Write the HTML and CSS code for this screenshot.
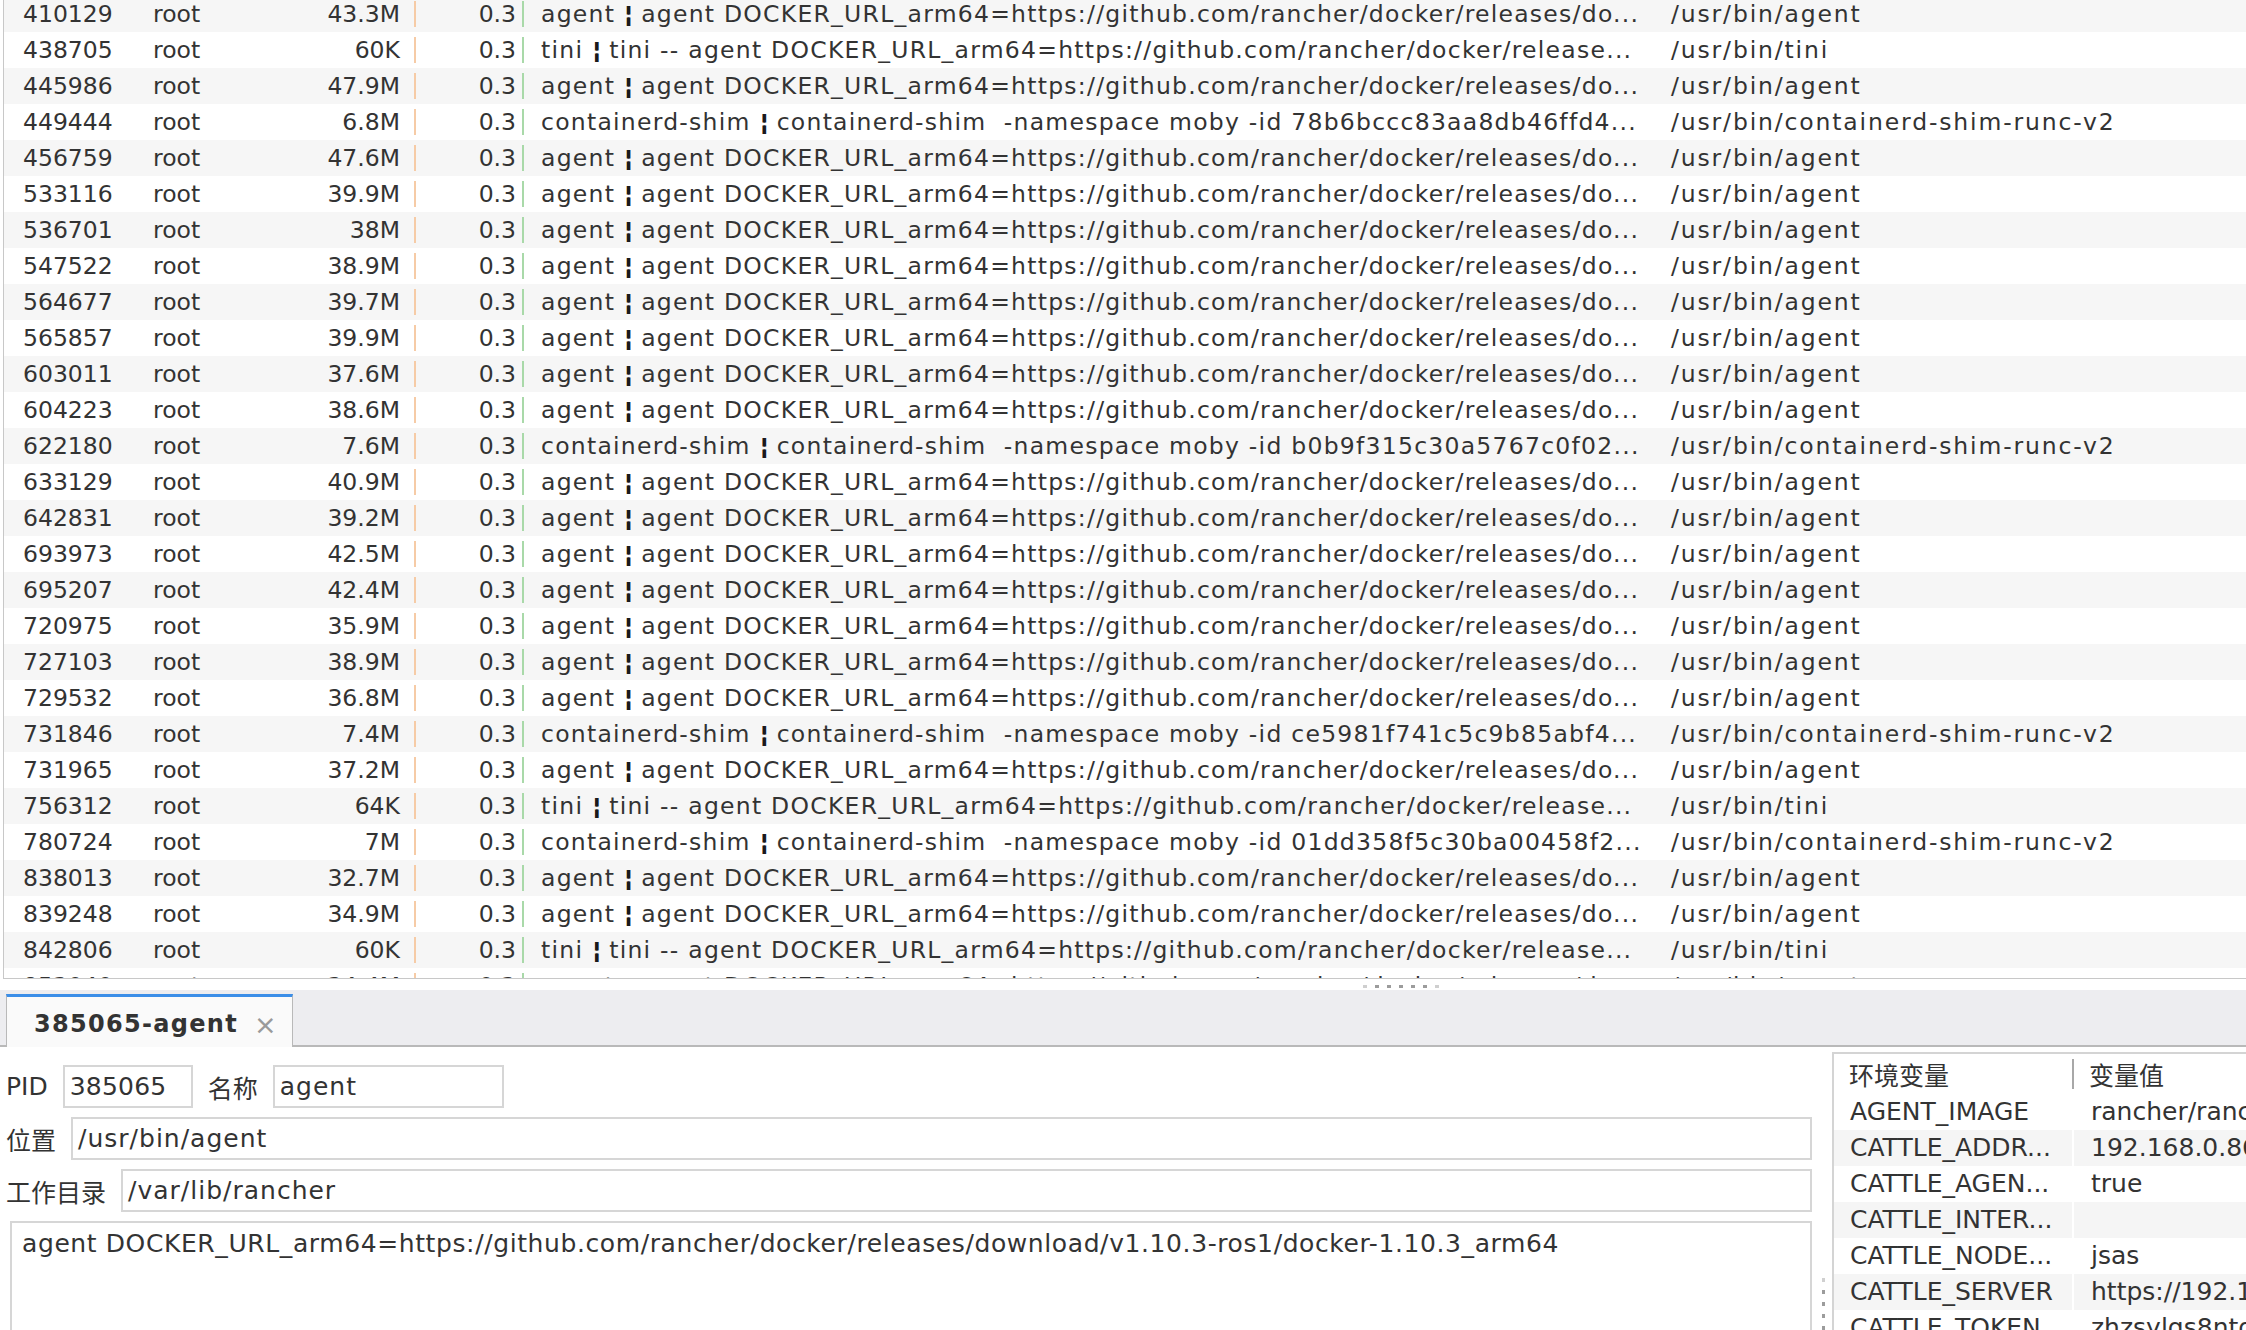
FILE: index.html
```html
<!DOCTYPE html>
<html lang="zh">
<head>
<meta charset="utf-8">
<title>进程</title>
<link rel="stylesheet" href="styles.css">
</head>
<body>
<div class="app">
  <div class="proc-table">
    <div class="rows">
      <div class="row"><span class="c-pid">410129</span><span class="c-user">root</span><span class="c-mem">43.3M</span><span class="sep sep-mem"></span><span class="c-cpu">0.3</span><span class="sep sep-cpu"></span><span class="c-cmd">agent <b class="bar">¦</b> agent DOCKER_URL_arm64=https://github.com/rancher/docker/releases/do...</span><span class="c-path">/usr/bin/agent</span></div>
      <div class="row"><span class="c-pid">438705</span><span class="c-user">root</span><span class="c-mem">60K</span><span class="sep sep-mem"></span><span class="c-cpu">0.3</span><span class="sep sep-cpu"></span><span class="c-cmd">tini <b class="bar">¦</b> tini -- agent DOCKER_URL_arm64=https://github.com/rancher/docker/release...</span><span class="c-path">/usr/bin/tini</span></div>
      <div class="row"><span class="c-pid">445986</span><span class="c-user">root</span><span class="c-mem">47.9M</span><span class="sep sep-mem"></span><span class="c-cpu">0.3</span><span class="sep sep-cpu"></span><span class="c-cmd">agent <b class="bar">¦</b> agent DOCKER_URL_arm64=https://github.com/rancher/docker/releases/do...</span><span class="c-path">/usr/bin/agent</span></div>
      <div class="row"><span class="c-pid">449444</span><span class="c-user">root</span><span class="c-mem">6.8M</span><span class="sep sep-mem"></span><span class="c-cpu">0.3</span><span class="sep sep-cpu"></span><span class="c-cmd">containerd-shim <b class="bar">¦</b> containerd-shim  -namespace moby -id 78b6bccc83aa8db46ffd4...</span><span class="c-path">/usr/bin/containerd-shim-runc-v2</span></div>
      <div class="row"><span class="c-pid">456759</span><span class="c-user">root</span><span class="c-mem">47.6M</span><span class="sep sep-mem"></span><span class="c-cpu">0.3</span><span class="sep sep-cpu"></span><span class="c-cmd">agent <b class="bar">¦</b> agent DOCKER_URL_arm64=https://github.com/rancher/docker/releases/do...</span><span class="c-path">/usr/bin/agent</span></div>
      <div class="row"><span class="c-pid">533116</span><span class="c-user">root</span><span class="c-mem">39.9M</span><span class="sep sep-mem"></span><span class="c-cpu">0.3</span><span class="sep sep-cpu"></span><span class="c-cmd">agent <b class="bar">¦</b> agent DOCKER_URL_arm64=https://github.com/rancher/docker/releases/do...</span><span class="c-path">/usr/bin/agent</span></div>
      <div class="row"><span class="c-pid">536701</span><span class="c-user">root</span><span class="c-mem">38M</span><span class="sep sep-mem"></span><span class="c-cpu">0.3</span><span class="sep sep-cpu"></span><span class="c-cmd">agent <b class="bar">¦</b> agent DOCKER_URL_arm64=https://github.com/rancher/docker/releases/do...</span><span class="c-path">/usr/bin/agent</span></div>
      <div class="row"><span class="c-pid">547522</span><span class="c-user">root</span><span class="c-mem">38.9M</span><span class="sep sep-mem"></span><span class="c-cpu">0.3</span><span class="sep sep-cpu"></span><span class="c-cmd">agent <b class="bar">¦</b> agent DOCKER_URL_arm64=https://github.com/rancher/docker/releases/do...</span><span class="c-path">/usr/bin/agent</span></div>
      <div class="row"><span class="c-pid">564677</span><span class="c-user">root</span><span class="c-mem">39.7M</span><span class="sep sep-mem"></span><span class="c-cpu">0.3</span><span class="sep sep-cpu"></span><span class="c-cmd">agent <b class="bar">¦</b> agent DOCKER_URL_arm64=https://github.com/rancher/docker/releases/do...</span><span class="c-path">/usr/bin/agent</span></div>
      <div class="row"><span class="c-pid">565857</span><span class="c-user">root</span><span class="c-mem">39.9M</span><span class="sep sep-mem"></span><span class="c-cpu">0.3</span><span class="sep sep-cpu"></span><span class="c-cmd">agent <b class="bar">¦</b> agent DOCKER_URL_arm64=https://github.com/rancher/docker/releases/do...</span><span class="c-path">/usr/bin/agent</span></div>
      <div class="row"><span class="c-pid">603011</span><span class="c-user">root</span><span class="c-mem">37.6M</span><span class="sep sep-mem"></span><span class="c-cpu">0.3</span><span class="sep sep-cpu"></span><span class="c-cmd">agent <b class="bar">¦</b> agent DOCKER_URL_arm64=https://github.com/rancher/docker/releases/do...</span><span class="c-path">/usr/bin/agent</span></div>
      <div class="row"><span class="c-pid">604223</span><span class="c-user">root</span><span class="c-mem">38.6M</span><span class="sep sep-mem"></span><span class="c-cpu">0.3</span><span class="sep sep-cpu"></span><span class="c-cmd">agent <b class="bar">¦</b> agent DOCKER_URL_arm64=https://github.com/rancher/docker/releases/do...</span><span class="c-path">/usr/bin/agent</span></div>
      <div class="row"><span class="c-pid">622180</span><span class="c-user">root</span><span class="c-mem">7.6M</span><span class="sep sep-mem"></span><span class="c-cpu">0.3</span><span class="sep sep-cpu"></span><span class="c-cmd">containerd-shim <b class="bar">¦</b> containerd-shim  -namespace moby -id b0b9f315c30a5767c0f02...</span><span class="c-path">/usr/bin/containerd-shim-runc-v2</span></div>
      <div class="row"><span class="c-pid">633129</span><span class="c-user">root</span><span class="c-mem">40.9M</span><span class="sep sep-mem"></span><span class="c-cpu">0.3</span><span class="sep sep-cpu"></span><span class="c-cmd">agent <b class="bar">¦</b> agent DOCKER_URL_arm64=https://github.com/rancher/docker/releases/do...</span><span class="c-path">/usr/bin/agent</span></div>
      <div class="row"><span class="c-pid">642831</span><span class="c-user">root</span><span class="c-mem">39.2M</span><span class="sep sep-mem"></span><span class="c-cpu">0.3</span><span class="sep sep-cpu"></span><span class="c-cmd">agent <b class="bar">¦</b> agent DOCKER_URL_arm64=https://github.com/rancher/docker/releases/do...</span><span class="c-path">/usr/bin/agent</span></div>
      <div class="row"><span class="c-pid">693973</span><span class="c-user">root</span><span class="c-mem">42.5M</span><span class="sep sep-mem"></span><span class="c-cpu">0.3</span><span class="sep sep-cpu"></span><span class="c-cmd">agent <b class="bar">¦</b> agent DOCKER_URL_arm64=https://github.com/rancher/docker/releases/do...</span><span class="c-path">/usr/bin/agent</span></div>
      <div class="row"><span class="c-pid">695207</span><span class="c-user">root</span><span class="c-mem">42.4M</span><span class="sep sep-mem"></span><span class="c-cpu">0.3</span><span class="sep sep-cpu"></span><span class="c-cmd">agent <b class="bar">¦</b> agent DOCKER_URL_arm64=https://github.com/rancher/docker/releases/do...</span><span class="c-path">/usr/bin/agent</span></div>
      <div class="row"><span class="c-pid">720975</span><span class="c-user">root</span><span class="c-mem">35.9M</span><span class="sep sep-mem"></span><span class="c-cpu">0.3</span><span class="sep sep-cpu"></span><span class="c-cmd">agent <b class="bar">¦</b> agent DOCKER_URL_arm64=https://github.com/rancher/docker/releases/do...</span><span class="c-path">/usr/bin/agent</span></div>
      <div class="row"><span class="c-pid">727103</span><span class="c-user">root</span><span class="c-mem">38.9M</span><span class="sep sep-mem"></span><span class="c-cpu">0.3</span><span class="sep sep-cpu"></span><span class="c-cmd">agent <b class="bar">¦</b> agent DOCKER_URL_arm64=https://github.com/rancher/docker/releases/do...</span><span class="c-path">/usr/bin/agent</span></div>
      <div class="row"><span class="c-pid">729532</span><span class="c-user">root</span><span class="c-mem">36.8M</span><span class="sep sep-mem"></span><span class="c-cpu">0.3</span><span class="sep sep-cpu"></span><span class="c-cmd">agent <b class="bar">¦</b> agent DOCKER_URL_arm64=https://github.com/rancher/docker/releases/do...</span><span class="c-path">/usr/bin/agent</span></div>
      <div class="row"><span class="c-pid">731846</span><span class="c-user">root</span><span class="c-mem">7.4M</span><span class="sep sep-mem"></span><span class="c-cpu">0.3</span><span class="sep sep-cpu"></span><span class="c-cmd">containerd-shim <b class="bar">¦</b> containerd-shim  -namespace moby -id ce5981f741c5c9b85abf4...</span><span class="c-path">/usr/bin/containerd-shim-runc-v2</span></div>
      <div class="row"><span class="c-pid">731965</span><span class="c-user">root</span><span class="c-mem">37.2M</span><span class="sep sep-mem"></span><span class="c-cpu">0.3</span><span class="sep sep-cpu"></span><span class="c-cmd">agent <b class="bar">¦</b> agent DOCKER_URL_arm64=https://github.com/rancher/docker/releases/do...</span><span class="c-path">/usr/bin/agent</span></div>
      <div class="row"><span class="c-pid">756312</span><span class="c-user">root</span><span class="c-mem">64K</span><span class="sep sep-mem"></span><span class="c-cpu">0.3</span><span class="sep sep-cpu"></span><span class="c-cmd">tini <b class="bar">¦</b> tini -- agent DOCKER_URL_arm64=https://github.com/rancher/docker/release...</span><span class="c-path">/usr/bin/tini</span></div>
      <div class="row"><span class="c-pid">780724</span><span class="c-user">root</span><span class="c-mem">7M</span><span class="sep sep-mem"></span><span class="c-cpu">0.3</span><span class="sep sep-cpu"></span><span class="c-cmd">containerd-shim <b class="bar">¦</b> containerd-shim  -namespace moby -id 01dd358f5c30ba00458f2...</span><span class="c-path">/usr/bin/containerd-shim-runc-v2</span></div>
      <div class="row"><span class="c-pid">838013</span><span class="c-user">root</span><span class="c-mem">32.7M</span><span class="sep sep-mem"></span><span class="c-cpu">0.3</span><span class="sep sep-cpu"></span><span class="c-cmd">agent <b class="bar">¦</b> agent DOCKER_URL_arm64=https://github.com/rancher/docker/releases/do...</span><span class="c-path">/usr/bin/agent</span></div>
      <div class="row"><span class="c-pid">839248</span><span class="c-user">root</span><span class="c-mem">34.9M</span><span class="sep sep-mem"></span><span class="c-cpu">0.3</span><span class="sep sep-cpu"></span><span class="c-cmd">agent <b class="bar">¦</b> agent DOCKER_URL_arm64=https://github.com/rancher/docker/releases/do...</span><span class="c-path">/usr/bin/agent</span></div>
      <div class="row"><span class="c-pid">842806</span><span class="c-user">root</span><span class="c-mem">60K</span><span class="sep sep-mem"></span><span class="c-cpu">0.3</span><span class="sep sep-cpu"></span><span class="c-cmd">tini <b class="bar">¦</b> tini -- agent DOCKER_URL_arm64=https://github.com/rancher/docker/release...</span><span class="c-path">/usr/bin/tini</span></div>
      <div class="row"><span class="c-pid">853040</span><span class="c-user">root</span><span class="c-mem">34.4M</span><span class="sep sep-mem"></span><span class="c-cpu">0.3</span><span class="sep sep-cpu"></span><span class="c-cmd">agent <b class="bar">¦</b> agent DOCKER_URL_arm64=https://github.com/rancher/docker/releases/do...</span><span class="c-path">/usr/bin/agent</span></div>
    </div>
  </div>

  <div class="hsplit">
    <span class="grip-h"><i></i><i></i><i></i><i></i><i></i><i></i><i></i></span>
  </div>

  <div class="tabstrip">
    <div class="tab">
      <span class="tab-title">385065-agent</span>
      <span class="tab-close">×</span>
    </div>
  </div>

  <div class="detail">
    <div class="form">
      <div class="frow">
        <label class="flabel">PID</label>
        <div class="field field-pid">385065</div>
        <label class="flabel">名称</label>
        <div class="field field-name">agent</div>
      </div>
      <div class="frow">
        <label class="flabel">位置</label>
        <div class="field field-grow">/usr/bin/agent</div>
      </div>
      <div class="frow">
        <label class="flabel">工作目录</label>
        <div class="field field-grow">/var/lib/rancher</div>
      </div>
      <div class="cmdline">agent DOCKER_URL_arm64=https://github.com/rancher/docker/releases/download/v1.10.3-ros1/docker-1.10.3_arm64</div>
    </div>

    <div class="vsplit">
      <span class="grip-v"><i></i><i></i><i></i><i></i><i></i></span>
    </div>

    <div class="env">
      <div class="env-head">
        <span class="eh-key">环境变量</span>
        <span class="eh-sep"></span>
        <span class="eh-val">变量值</span>
      </div>
      <div class="env-row"><span class="ek">AGENT_IMAGE</span><span class="ev">rancher/rancher-agent:v2.5.8</span></div>
      <div class="env-row"><span class="ek">CATTLE_ADDR...</span><span class="ev">192.168.0.86</span></div>
      <div class="env-row"><span class="ek">CATTLE_AGEN...</span><span class="ev">true</span></div>
      <div class="env-row"><span class="ek">CATTLE_INTER...</span><span class="ev"></span></div>
      <div class="env-row"><span class="ek">CATTLE_NODE...</span><span class="ev">jsas</span></div>
      <div class="env-row"><span class="ek">CATTLE_SERVER</span><span class="ev">https://192.168.0.86</span></div>
      <div class="env-row"><span class="ek">CATTLE_TOKEN</span><span class="ev">zhzsylqs8ntq</span></div>
    </div>
  </div>
</div>
</body>
</html>
```

FILE: styles.css
```css
* { box-sizing: border-box; }

html, body {
  margin: 0;
  padding: 0;
  background: #ffffff;
}

body {
  width: 2246px;
  height: 1330px;
  overflow: hidden;
  font-family: "DejaVu Sans", "Noto Sans CJK SC", sans-serif;
  color: #333333;
}

.app {
  display: flex;
  flex-direction: column;
  height: 1330px;
}

/* ---------- process table ---------- */
.proc-table {
  height: 979px;
  margin-left: 3px;
  border-left: 1px solid #c8c8c8;
  border-bottom: 1px solid #c8c8c8;
  overflow: hidden;
  flex: none;
}

.rows {
  margin-top: -4px;
}

.row {
  display: flex;
  align-items: center;
  height: 36px;
  line-height: 36px;
  font-size: 23.5px;
  white-space: pre;
  background: #ffffff;
}

.row:nth-child(odd) {
  background: #f6f6f6;
}

.c-pid {
  width: 149px;
  padding-left: 19px;
  flex: none;
}

.c-user {
  width: 130px;
  flex: none;
}

.c-mem {
  width: 117px;
  text-align: right;
  flex: none;
}

.sep {
  flex: none;
  width: 2px;
  height: 26px;
}

.sep-mem {
  margin-left: 14px;
  background: #f6cba6;
}

.c-cpu {
  width: 100px;
  text-align: right;
  flex: none;
}

.sep-cpu {
  margin-left: 6px;
  background: #a9d9a9;
}

.c-cmd {
  width: 1147px;
  padding-left: 17px;
  overflow: hidden;
  flex: none;
  letter-spacing: 1.25px;
}

.bar {
  font-weight: bold;
  color: #1a1a1a;
  letter-spacing: 0;
  text-shadow: 1px 0 0 #1a1a1a;
}

.c-path {
  flex: none;
  letter-spacing: 1.85px;
}

/* ---------- horizontal splitter ---------- */
.hsplit {
  height: 11px;
  flex: none;
  display: flex;
  align-items: flex-start;
  padding-left: 1363px;
  padding-top: 6px;
}

.grip-h {
  display: flex;
  gap: 8px;
}

.grip-h i {
  display: block;
  width: 4px;
  height: 3px;
  background: #9c9c9c;
}

.grip-h i:first-child,
.grip-h i:last-child {
  background: #cfcfcf;
}

/* ---------- tab strip ---------- */
.tabstrip {
  flex: none;
  height: 57px;
  background: #ededf0;
  border-bottom: 2px solid #b9b9b9;
  display: flex;
  align-items: flex-end;
  padding-left: 6px;
}

.tab {
  width: 287px;
  height: 53px;
  margin-bottom: -2px;
  background: #fafafa;
  border-top: 3px solid #3b8ee8;
  border-left: 1px solid #b9b9b9;
  border-right: 1px solid #b9b9b9;
  display: flex;
  align-items: center;
  padding-left: 27px;
  padding-top: 4px;
  position: relative;
}

.tab-title {
  font-weight: bold;
  font-size: 24px;
  letter-spacing: 1.3px;
  color: #333333;
}

.tab-close {
  margin-left: 16px;
  font-size: 27px;
  color: #9a9a9a;
  line-height: 1;
}

/* ---------- detail ---------- */
.detail {
  flex: 1;
  display: flex;
  min-height: 0;
}

.form {
  width: 1812px;
  flex: none;
  padding-top: 18px;
  padding-left: 6px;
  display: flex;
  flex-direction: column;
  gap: 9px;
}

.frow {
  display: flex;
  align-items: center;
  height: 43px;
}

.flabel {
  font-size: 25px;
  margin-right: 15px;
  white-space: nowrap;
}

.field {
  height: 43px;
  border: 2px solid #d6d6d6;
  background: #ffffff;
  font-size: 25px;
  line-height: 39px;
  padding-left: 5px;
  white-space: nowrap;
  overflow: hidden;
  letter-spacing: 1px;
}

.field-pid {
  width: 130px;
  margin-right: 15px;
  letter-spacing: 0.2px;
}

.field-name {
  width: 231px;
}

.field-grow {
  flex: 1;
}

.cmdline {
  flex: 1;
  margin-left: 4px;
  border: 2px solid #d6d6d6;
  border-bottom: none;
  font-size: 25px;
  padding: 6px 10px;
  white-space: nowrap;
  overflow: hidden;
  letter-spacing: 0.6px;
}

/* ---------- vertical splitter ---------- */
.vsplit {
  width: 20px;
  flex: none;
  padding-top: 231px;
  padding-left: 10px;
}

.grip-v {
  display: flex;
  flex-direction: column;
  gap: 8px;
}

.grip-v i {
  display: block;
  width: 3px;
  height: 4px;
  background: #9c9c9c;
}

.grip-v i:first-child {
  background: #d0d0d0;
}

/* ---------- env table ---------- */
.env {
  flex: 1;
  margin-top: 5px;
  border-left: 2px solid #d4d4d4;
  border-top: 2px solid #d4d4d4;
  overflow: hidden;
  font-size: 25px;
}

.env-head {
  height: 40px;
  display: flex;
  align-items: center;
  white-space: nowrap;
}

.eh-key {
  width: 238px;
  padding-left: 15px;
  flex: none;
}

.eh-sep {
  width: 2px;
  height: 30px;
  background: #a8a8a8;
  flex: none;
}

.eh-val {
  padding-left: 15px;
}

.env-row {
  display: flex;
  height: 36px;
  line-height: 36px;
  white-space: nowrap;
  gap: 2px;
}

.ek {
  width: 238px;
  padding-left: 16px;
  flex: none;
  overflow: hidden;
}

.ev {
  flex: 1;
  padding-left: 17px;
  overflow: hidden;
}

.env-row:nth-child(odd) .ek,
.env-row:nth-child(odd) .ev {
  background: #f5f5f5;
}
```
